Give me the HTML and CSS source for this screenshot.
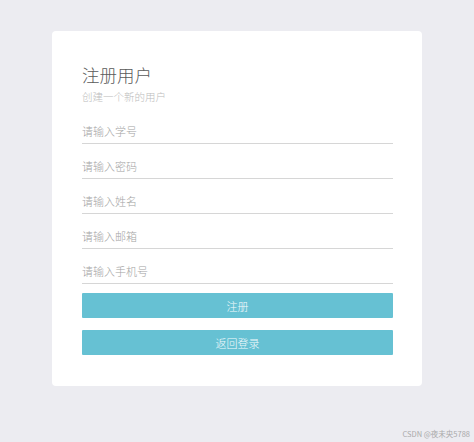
FILE: index.html
```html
<!DOCTYPE html>
<html lang="zh-CN">
<head>
	<meta charset="UTF-8" />
	<meta name="viewport" content="width=device-width, initial-scale=1.0" />
	<title>注册用户</title>
	<link rel="stylesheet" href="styles.css">
</head>
<body>
	<!-- Register Card -->
	<main class="card">
		<h2 class="title">注册用户</h2>
		<p class="subtitle">创建一个新的用户</p>

		<form class="register-form">
			<input type="text" placeholder="请输入学号" />
			<input type="password" placeholder="请输入密码" />
			<input type="text" placeholder="请输入姓名" />
			<input type="text" placeholder="请输入邮箱" />
			<input type="text" placeholder="请输入手机号" />

			<button type="submit" class="btn">注册</button>
			<button type="button" class="btn back">返回登录</button>
		</form>
	</main>
	<!-- End of Register Card -->

	<div class="watermark">CSDN @夜未央5788</div>
</body>
</html>
```

FILE: styles.css
```css
/* Resets */
* {
	margin: 0;
	padding: 0;
	box-sizing: border-box;
	font-family: "Noto Sans CJK SC", "Noto Sans", sans-serif;
}

body {
	background: #ececf1;
	min-height: 442px;
	padding-top: 31px;
	position: relative;
}

.card {
	width: 370px;
	margin: 0 auto;
	background: #fff;
	border-radius: 4px;
	padding: 32px 29px 31px 30px;
}

.title {
	font-size: 17.5px;
	font-weight: 300;
	line-height: 24px;
	color: #5a5a5a;
}

.subtitle {
	margin-top: 3px;
	font-size: 10.5px;
	font-weight: 300;
	line-height: 14px;
	color: #bcbcbc;
}

.register-form {
	margin-top: 5px;
	display: flex;
	flex-direction: column;
}

.register-form input {
	appearance: none;
	display: block;
	width: 100%;
	height: 35px;
	padding: 14px 0 4px;
	border: none;
	border-bottom: 1px solid #d6d6d6;
	outline: none;
	font-size: 11px;
	font-weight: 300;
	line-height: 16px;
	color: #555;
	background: transparent;
}

.register-form input::placeholder {
	color: #a4a4a4;
}

.btn {
	appearance: none;
	display: block;
	width: 100%;
	height: 25px;
	margin-top: 9px;
	border: none;
	border-radius: 1px;
	background: #66c1d3;
	color: #f4fbfd;
	font-size: 11px;
	font-weight: 300;
	cursor: pointer;
}

.btn.back {
	margin-top: 12px;
}

.watermark {
	position: absolute;
	right: 4px;
	bottom: 3px;
	font-size: 7.5px;
	color: #aaa;
}
```
